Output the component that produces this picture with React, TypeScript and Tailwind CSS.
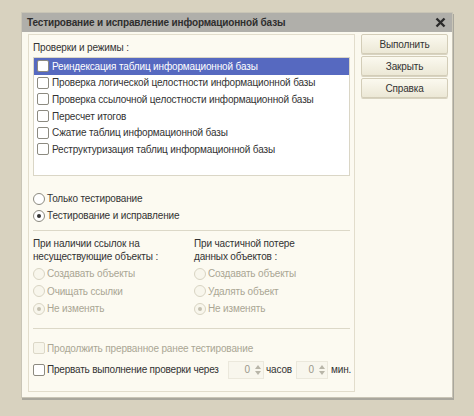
import React from "react";

const FONT = { fontFamily: '"Liberation Sans", Arial, sans-serif' };

function CheckBox({ disabled = false }: { disabled?: boolean }) {
  return (
    <span
      className={`inline-block w-[12px] h-[12px] rounded-[2px] border shrink-0 ${
        disabled ? "border-[#dcd8c8] bg-[#f7f5ea]" : "border-[#8c8a80] bg-white"
      }`}
    />
  );
}

function Radio({ checked = false, disabled = false }: { checked?: boolean; disabled?: boolean }) {
  return (
    <span
      className={`w-[12px] h-[12px] rounded-full border shrink-0 flex items-center justify-center ${
        disabled ? "border-[#d8d4c3] bg-[#f8f6ec]" : "border-[#8c8a80] bg-white"
      }`}
    >
      {checked && (
        <span
          className={`w-[4px] h-[4px] rounded-full ${disabled ? "bg-[#c4c0b0]" : "bg-[#333]"}`}
        />
      )}
    </span>
  );
}

function Spin({ w }: { w: string }) {
  return (
    <span className={`flex items-center h-[18px] shrink-0 ${w} bg-[#f8f6ed] border border-[#ebe8dc]`}>
      <span className="flex-1 text-right pr-[3px] text-[#9b988b]">0</span>
      <span className="flex flex-col items-center justify-center w-[10px] h-full">
        <svg width="6" height="4" viewBox="0 0 6 4">
          <path d="M0 4 L3 0 L6 4 Z" fill="#b8b5a8" />
        </svg>
        <svg width="6" height="4" viewBox="0 0 6 4" className="mt-[2px]">
          <path d="M0 0 L3 4 L6 0 Z" fill="#b8b5a8" />
        </svg>
      </span>
    </span>
  );
}

const CHECKS = [
  "Реиндексация таблиц информационной базы",
  "Проверка логической целостности информационной базы",
  "Проверка ссылочной целостности информационной базы",
  "Пересчет итогов",
  "Сжатие таблиц информационной базы",
  "Реструктуризация таблиц информационной базы",
];

function Btn({ label }: { label: string }) {
  return (
    <div className="h-[20px] rounded-[2px] border border-[#d3cdb8] bg-gradient-to-b from-[#fbf9ef] to-[#ece8d6] flex items-center justify-center text-[#333] shadow-[0_1px_0_#d8d3c0]">
      {label}
    </div>
  );
}

export default function App() {
  return (
    <div
      className="w-[474px] h-[416px] bg-[#d8d2bf] pt-[12px] pl-[21px] text-[10px] tracking-[-0.15px] text-[#333]"
      style={FONT}
    >
      <div className="w-[432px] h-[386px] bg-[#fbf9ef] border border-[#c9c5b6] shadow-[1px_2px_0_#a9a79d] flex flex-col">
        <div className="h-[19px] bg-[#b0afaa] flex items-center justify-between pl-[5px] pr-[6px]">
          <span className="font-bold text-[10px] text-[#2e2e2e]">
            Тестирование и исправление информационной базы
          </span>
          <svg width="11" height="11" viewBox="0 0 11 11">
            <path d="M1.5 1.5 L9.5 9.5 M9.5 1.5 L1.5 9.5" stroke="#2a2a2a" strokeWidth="2.4" />
          </svg>
        </div>

        <div className="flex gap-[6px] pl-[6px] pt-[2px]">
          <div className="w-[327px] h-[358px] border border-[#e2ddcc] bg-[#fcfaf1] px-[4px] flex flex-col">
            <div className="pt-[5px] h-[22px]">Проверки и режимы :</div>
            <div className="h-[119px] border border-[#dad6c6] bg-white">
              {CHECKS.map((c, i) => (
                <div
                  key={c}
                  className={`h-[16.6px] flex items-center gap-[3px] pl-[3px] ${
                    i === 0 ? "bg-[#5669c0] text-white" : ""
                  }`}
                >
                  <CheckBox />
                  <span>{c}</span>
                </div>
              ))}
            </div>

            <div className="mt-[14px] flex flex-col">
              <div className="h-[17px] flex items-center gap-[2px]">
                <Radio />
                <span>Только тестирование</span>
              </div>
              <div className="h-[17px] flex items-center gap-[2px]">
                <Radio checked />
                <span>Тестирование и исправление</span>
              </div>
            </div>

            <div className="mt-[6px] border-t border-[#dcd8c8]" />

            <div className="flex pt-[6px]">
              <div className="w-[161px] flex flex-col">
                <div className="leading-[13px]">При наличии ссылок на</div>
                <div className="leading-[13px]">несуществующие объекты :</div>
                <div className="mt-[2px] flex flex-col text-[#aaa694]">
                  <div className="h-[17.5px] flex items-center gap-[2px]">
                    <Radio disabled />
                    <span>Создавать объекты</span>
                  </div>
                  <div className="h-[17.5px] flex items-center gap-[2px]">
                    <Radio disabled />
                    <span>Очищать ссылки</span>
                  </div>
                  <div className="h-[17.5px] flex items-center gap-[2px]">
                    <Radio disabled checked />
                    <span>Не изменять</span>
                  </div>
                </div>
              </div>
              <div className="flex-1 flex flex-col">
                <div className="leading-[13px]">При частичной потере</div>
                <div className="leading-[13px]">данных объектов :</div>
                <div className="mt-[2px] flex flex-col text-[#aaa694]">
                  <div className="h-[17.5px] flex items-center gap-[2px]">
                    <Radio disabled />
                    <span>Создавать объекты</span>
                  </div>
                  <div className="h-[17.5px] flex items-center gap-[2px]">
                    <Radio disabled />
                    <span>Удалять объект</span>
                  </div>
                  <div className="h-[17.5px] flex items-center gap-[2px]">
                    <Radio disabled checked />
                    <span>Не изменять</span>
                  </div>
                </div>
              </div>
            </div>

            <div className="mt-[10px] border-t border-[#dcd8c8]" />

            <div className="mt-[11px] h-[17px] flex items-center gap-[2px] text-[#aaa694]">
              <CheckBox disabled />
              <span>Продолжить прерванное ранее тестирование</span>
            </div>
            <div className="mt-[3px] h-[20px] flex items-center whitespace-nowrap">
              <CheckBox />
              <span className="ml-[2px] w-[181px] shrink-0 tracking-[-0.2px]">
                Прервать выполнение проверки через
              </span>
              <Spin w="w-[36px]" />
              <span className="ml-[2px] w-[30px] shrink-0">часов</span>
              <Spin w="w-[32px]" />
              <span className="ml-[3px]">мин.</span>
            </div>
          </div>

          <div className="w-[87px] flex flex-col gap-[2px] pt-[0px]">
            <Btn label="Выполнить" />
            <Btn label="Закрыть" />
            <Btn label="Справка" />
          </div>
        </div>
      </div>
    </div>
  );
}
